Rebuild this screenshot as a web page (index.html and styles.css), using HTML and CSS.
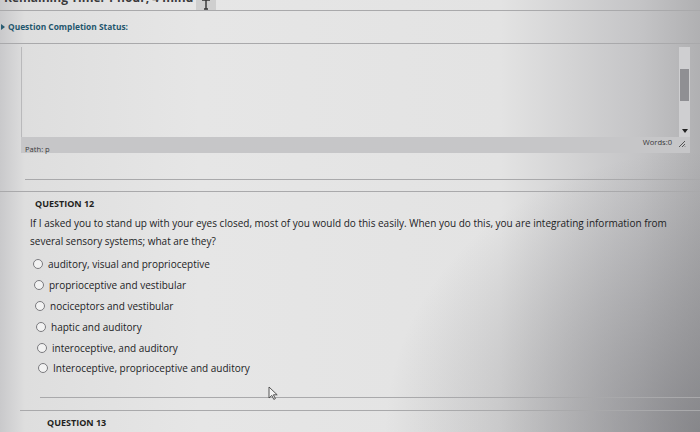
FILE: index.html
```html
<!DOCTYPE html>
<html>
<head>
<meta charset="utf-8">
<link rel="stylesheet" href="styles.css">
</head>
<body>
<div class="page">
  <div class="timer">
    <span class="timer-text">Remaining Time: 1 hour, 4 minutes, 15 seconds.</span>
    <span class="ibeam"><svg width="12" height="11" viewBox="0 0 12 11"><path d="M2 1H10M6 1V10M4 10H8" stroke="#333" stroke-width="1.4" fill="none"/></svg></span>
  </div>
  <div class="completion">
    <span class="arrow"></span>
    <span class="completion-title">Question Completion Status:</span>
  </div>
  <div class="editor">
    <div class="editor-body">
      <div class="editor-area"></div>
      <div class="scrollbar">
        <div class="scroll-track"><div class="scroll-thumb"></div></div>
        <div class="scroll-down">
          <svg width="6" height="4" viewBox="0 0 6 4"><path d="M0 0H6L3 4Z" fill="#222"/></svg>
        </div>
      </div>
    </div>
    <div class="statusbar">
      <span class="path">Path: p</span>
      <span class="words">Words:0</span>
      <svg class="grip" width="8" height="8" viewBox="0 0 8 8"><path d="M7 1L1 7M7 4L4 7M7 6.5L6.5 7" stroke="#555" stroke-width="1"/></svg>
    </div>
  </div>
  <div class="sep sep-a"></div>
  <div class="sep sep-b"></div>
  <div class="question">
    <div class="q-title">QUESTION 12</div>
    <p class="q-text">If I asked you to stand up with your eyes closed, most of you would do this easily. When you do this, you are integrating information from several sensory systems; what are they?</p>
    <ul class="options">
      <li class="opt o1"><span class="radio"></span>auditory, visual and proprioceptive</li>
      <li class="opt o2"><span class="radio"></span>proprioceptive and vestibular</li>
      <li class="opt o3"><span class="radio"></span>nociceptors and vestibular</li>
      <li class="opt o4"><span class="radio"></span>haptic and auditory</li>
      <li class="opt o5"><span class="radio"></span>interoceptive, and auditory</li>
      <li class="opt o6"><span class="radio"></span>Interoceptive, proprioceptive and auditory</li>
    </ul>
    <svg class="cursor" width="11" height="14" viewBox="0 0 11 14"><path d="M1 1V12L3.8 9.4L5.8 13.4L7.4 12.6L5.4 8.8H9.2Z" fill="#f4f4f4" stroke="#444" stroke-width="0.9" stroke-linejoin="round"/></svg>
  </div>
  <div class="sep sep-c"></div>
  <div class="sep sep-d"></div>
  <div class="q-title next">QUESTION 13</div>
</div>
</body>
</html>
```

FILE: styles.css
```css
html, body {
  margin: 0;
  padding: 0;
  height: 432px;
  overflow: hidden;
}
body {
  font-family: "Open Sans", "Liberation Sans", sans-serif;
  color: #2b2b2d;
  background:
    radial-gradient(ellipse 45% 65% at 100% 100%, rgba(100,100,105,0.55), rgba(100,100,105,0) 100%),
    linear-gradient(90deg, #c9c9cb 0px, #dedede 25px, #e6e6e6 200px, #e3e3e3 500px, #c4c4c6 640px, #b0b0b2 700px);
}
.page {
  position: relative;
  width: 700px;
  height: 432px;
  overflow: hidden;
}
.timer {
  height: 10px;
  border-bottom: 1px solid #a9a9ab;
  position: relative;
  overflow: hidden;
}
.timer-text {
  display: block;
  width: 190px;
  white-space: nowrap;
  overflow: hidden;
  margin-top: -11px;
  margin-left: 4px;
  font-size: 12px;
  font-weight: 700;
  color: #3a3a3c;
}
.ibeam {
  position: absolute;
  left: 196px;
  top: -3px;
  width: 20px;
  height: 13px;
  background: #cfcfcf;
  display: flex;
  justify-content: center;
  align-items: flex-end;
}
.completion {
  display: flex;
  align-items: center;
  height: 33px;
  border-bottom: 1px solid #a9a9ab;
  box-sizing: border-box;
}
.arrow {
  width: 0;
  height: 0;
  border-top: 3px solid transparent;
  border-bottom: 3px solid transparent;
  border-left: 4px solid #2a5d72;
  margin-left: 1px;
  margin-right: 3px;
}
.completion-title {
  font-size: 8.4px;
  font-weight: 700;
  color: #1f566d;
  margin-top: -2px;
}
.editor {
  margin: 3px 10px 0 21px;
}
.editor-body {
  display: flex;
  height: 90px;
  border-left: 1px solid #b9b9bb;
}
.editor-area {
  flex: 1;
}
.scrollbar {
  width: 11px;
  background: #cfcfd1;
  display: flex;
  flex-direction: column;
}
.scroll-track {
  flex: 1;
  padding-top: 22px;
}
.scroll-thumb {
  margin: 0 1px;
  height: 32px;
  background: #8f8f93;
}
.scroll-down {
  height: 12px;
  display: flex;
  align-items: center;
  justify-content: center;
}
.statusbar {
  height: 16px;
  background: #c6c6c8;
  display: flex;
  align-items: center;
  font-size: 7.6px;
  color: #3a3a3c;
  padding: 0 4px;
}
.path {
  flex: 1;
  margin-top: 8px;
}
.words {
  margin-top: -6px;
  margin-right: 6px;
}
.grip {
  margin-top: -2px;
}
.sep {
  height: 0;
  border-top: 1px solid #a9a9ab;
}
.sep-a {
  margin: 26px 0 0 25px;
}
.sep-b {
  margin: 11px 0 0 0;
}
.question {
  position: relative;
  padding: 5px 0 0 30px;
}
.q-title {
  font-size: 9px;
  font-weight: 700;
  color: #1f1f21;
  margin-left: 5px;
}
.q-text {
  margin: 4px 30px 0 0;
  font-size: 10px;
  line-height: 18px;
  color: #222224;
}
.options {
  list-style: none;
  margin: 4px 0 0 0;
  padding: 0;
}
.opt {
  display: flex;
  align-items: center;
  height: 20.8px;
  font-size: 10px;
  color: #222224;
}
.o2 { margin-left: 1px; }
.o3 { margin-left: 2px; }
.o4 { margin-left: 3px; }
.o5 { margin-left: 4px; }
.o6 { margin-left: 5px; }
.radio {
  width: 8px;
  height: 8px;
  border: 1px solid #7a7a7e;
  border-radius: 50%;
  background: #f2f2f2;
  margin: 0 5px 0 3px;
}
.cursor {
  position: absolute;
  left: 268px;
  top: 194px;
}
.sep-c {
  margin: 18px 0 0 40px;
}
.sep-d {
  margin: 12px 0 0 20px;
}
.next {
  margin: 5px 0 0 47px;
  font-size: 9px;
}
```
